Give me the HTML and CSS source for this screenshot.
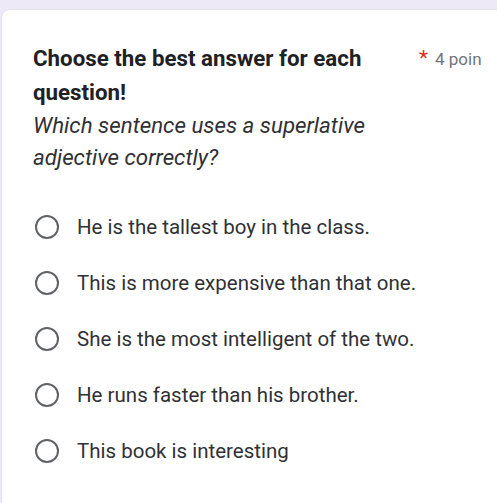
FILE: index.html
```html
<!DOCTYPE html>
<html lang="en">
<head>
<meta charset="utf-8">
<link rel="stylesheet" href="styles.css">
</head>
<body>
<div class="page">
  <div class="card">
    <div class="head">
      <div class="question">
        <div class="title">Choose the best answer for each question!</div>
        <div class="desc">Which sentence uses a superlative adjective correctly?</div>
      </div>
      <div class="points"><span class="req">*</span><span class="pts">4 poin</span></div>
    </div>
    <ul class="options">
      <li class="option"><span class="radio"></span><span class="label">He is the tallest boy in the class.</span></li>
      <li class="option"><span class="radio"></span><span class="label">This is more expensive than that one.</span></li>
      <li class="option"><span class="radio"></span><span class="label">She is the most intelligent of the two.</span></li>
      <li class="option"><span class="radio"></span><span class="label">He runs faster than his brother.</span></li>
      <li class="option"><span class="radio"></span><span class="label">This book is interesting</span></li>
    </ul>
  </div>
</div>
</body>
</html>
```
FILE: styles.css
```css
html, body {
  margin: 0;
  padding: 0;
  background: #ede9f6;
  overflow: hidden;
}
.page {
  width: 497px;
  height: 503px;
  padding-top: 9px;
  box-sizing: border-box;
  font-family: Roboto, "Noto Sans", sans-serif;
  color: #202124;
  overflow: hidden;
}
.card {
  margin-left: 1px;
  height: 494px;
  background: #fff;
  border: 1px solid #e4e4e8;
  border-right: none;
  border-bottom: none;
  border-radius: 9px 0 0 0;
  padding: 31px 0 0 31px;
  box-sizing: border-box;
}
.head {
  display: flex;
  align-items: flex-start;
}
.question {
  width: 346px;
}
.title {
  font-size: 22.3px;
  font-weight: 700;
  line-height: 34px;
  color: #202124;
}
.desc {
  font-size: 22.3px;
  font-style: italic;
  line-height: 32px;
  color: #303134;
}
.points {
  margin-left: 40px;
  font-size: 17px;
  line-height: 34px;
  color: #70757a;
  white-space: nowrap;
  display: flex;
  align-items: baseline;
}
.req {
  color: #d93025;
  font-size: 21px;
  margin-right: 7px;
}
.options {
  list-style: none;
  margin: 38px 0 0 0;
  padding: 0;
  display: flex;
  flex-direction: column;
  gap: 24px;
}
.option {
  display: flex;
  align-items: center;
  height: 32px;
}
.radio {
  width: 20px;
  height: 20px;
  border: 2.5px solid #5f6368;
  border-radius: 50%;
  margin-left: 2px;
  flex: none;
}
.label {
  margin-left: 18px;
  font-size: 20.5px;
  color: #303134;
}
```
